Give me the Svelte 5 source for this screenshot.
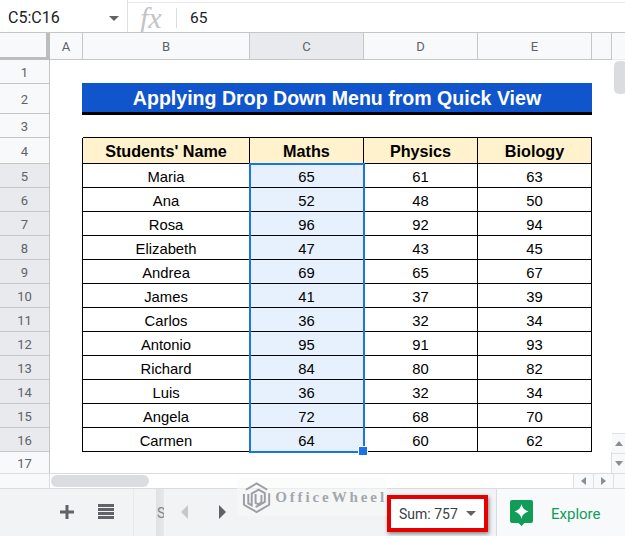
<script>
  const students = [
    ['Maria', 65, 61, 63], ['Ana', 52, 48, 50], ['Rosa', 96, 92, 94], ['Elizabeth', 47, 43, 45],
    ['Andrea', 69, 65, 67], ['James', 41, 37, 39], ['Carlos', 36, 32, 34], ['Antonio', 95, 91, 93],
    ['Richard', 84, 80, 82], ['Luis', 36, 32, 34], ['Angela', 72, 68, 70], ['Carmen', 64, 60, 62]
  ];
  const columns = ['A', 'B', 'C', 'D', 'E'];
</script>

<div class="app">
  <div class="formula">
    <div class="namebox">
      <span class="name">C5:C16</span>
      <span class="tri namebox-tri"></span>
    </div>
    <div class="fx-area">
      <span class="fx">fx</span>
      <span class="fx-sep"></span>
      <span class="value">65</span>
    </div>
  </div>

  <div class="grid">
    <div class="corner"></div>
    {#each columns as col}
      <div class="colhead" class:active={col === 'C'}>{col}</div>
    {/each}
    <div class="colhead"></div>
    <div class="scrollhead"></div>

    <div class="vscroll">
      <div class="vthumb"></div>
      <div class="vspace"></div>
      <div class="vbtn"><span class="arrow up"></span></div>
      <div class="vbtn"><span class="arrow down"></span></div>
    </div>

    <div class="rowhead">1</div><div class="cell"></div><div class="cell"></div><div class="cell"></div><div class="cell"></div><div class="cell"></div><div class="cell"></div>

    <div class="rowhead">2</div><div class="cell"></div>
    <div class="title">Applying Drop Down Menu from Quick View</div>
    <div class="cell"></div>

    <div class="rowhead">3</div><div class="cell"></div><div class="cell under"></div><div class="cell under"></div><div class="cell under"></div><div class="cell under"></div><div class="cell"></div>

    <div class="rowhead">4</div><div class="cell edge"></div>
    <div class="cell th">Students' Name</div>
    <div class="cell th">Maths</div>
    <div class="cell th">Physics</div>
    <div class="cell th">Biology</div>
    <div class="cell"></div>

    {#each students as s, i}
      <div class="rowhead active">{i + 5}</div>
      <div class="cell edge"></div>
      <div class="cell td">{s[0]}</div>
      <div class="cell td picked">{s[1]}</div>
      <div class="cell td">{s[2]}</div>
      <div class="cell td">{s[3]}</div>
      <div class="cell"></div>
    {/each}

    <div class="rowhead last">17</div>

    <div class="selection"><span class="handle"></span></div>
  </div>

  <div class="hbar">
    <div class="hbar-left"></div>
    <div class="hbar-track"><div class="hthumb"></div></div>
    <div class="hbtn"><span class="arrow left"></span></div>
    <div class="hbtn"><span class="arrow right"></span></div>
    <div class="hbar-end"></div>
  </div>

  <div class="footer">
    <div class="tools">
      <svg class="plus" width="14" height="14" viewBox="0 0 14 14"><path d="M5.500 0h3v5.500H14v3H8.500V14h-3V8.500H0v-3h5.500z" fill="#5f6368"/></svg>
      <svg class="menu" width="16" height="15" viewBox="0 0 16 15"><path d="M0 0h16v3H0zM0 4h16v3H0zM0 8h16v3H0zM0 12h16v3H0z" fill="#5f6368"/></svg>
    </div>
    <div class="clip"><span>S</span></div>
    <div class="nav">
      <span class="arrow big-left"></span>
      <span class="arrow big-right"></span>
    </div>
    <div class="sum">
      <span>Sum: 757</span>
      <span class="tri sum-tri"></span>
    </div>
    <div class="explore">
      <svg width="23" height="26" viewBox="0 0 23 26">
        <path d="M2 0h19a2 2 0 0 1 2 2v19a2 2 0 0 1-2 2h-6.500l-3 3-3-3H2a2 2 0 0 1-2-2V2a2 2 0 0 1 2-2z" fill="#0f9d58"/>
        <path d="M11.500 4c.8 4 2.800 6 7 7.500-4.200 1.500-6.200 3.500-7 7.500-.8-4-2.800-6-7-7.500 4.200-1.500 6.200-3.500 7-7.500z" fill="#fff"/>
      </svg>
      <span class="explore-label">Explore</span>
    </div>
  </div>

  <div class="watermark">
    <svg width="30" height="33" viewBox="0 0 30 33" fill="none" stroke="#9a9ea5" stroke-width="2">
      <path d="M4 8.500 15 2l11 6.500M28 12v12l-13 7.500L2 24V13"/>
      <path d="M6.500 13v9.500l3.500 2V12.500L17 8.500l6.500 3.500v9l-8.500 5-1-.5"/>
      <path d="M14 13v9l3 1.500 3-2V14"/>
    </svg>
    <span>OfficeWheel</span>
  </div>
</div>

<style>
  :global(body) { margin: 0; background: #fff; }

  .app {
    position: relative;
    width: 625px;
    height: 536px;
    overflow: hidden;
    display: flex;
    flex-direction: column;
    font-family: Roboto, "Liberation Sans", sans-serif;
    color: #000;
    background: #fff;
  }

  .formula {
    height: 32px;
    display: flex;
    border-bottom: 1px solid #c4c7c5;
    flex: none;
  }
  .namebox {
    width: 128px;
    display: flex;
    align-items: center;
    border-right: 1px solid #e0e0e0;
    padding: 2px 0 0 8px;
    box-sizing: border-box;
    font-size: 16px;
    color: #202124;
  }
  .name { flex: 1; }
  .tri { width: 0; height: 0; display: block; border-left: 5px solid transparent; border-right: 5px solid transparent; border-top: 5px solid #5f6368; }
  .namebox-tri { margin-right: 8px; margin-top: 2px; }
  .fx-area {
    flex: 1;
    display: flex;
    align-items: center;
    margin-top: 2px;
    border-top: 1px solid #e8eaed;
  }
  .fx {
    margin-left: 12px;
    width: 36px;
    font: italic 30px "Liberation Serif", serif;
    color: #c2c4c6;
    line-height: 26px;
  }
  .fx-sep { width: 1px; height: 20px; background: #dadce0; }
  .value { margin-left: 13px; font-size: 15.500px; color: #202124; }

  .grid {
    height: 440px;
    flex: none;
    display: grid;
    position: relative;
    overflow: hidden;
    grid-template-columns: 50px 33px 167px 114px 114px 114px 20px 13px;
    grid-template-rows: 27px 24px 30px 24px 26px repeat(12, 24px) 21px;
  }
  .corner {
    background: #f8f9fa;
    border-right: 4px solid #bdbdbd;
    border-bottom: 3px solid #bdbdbd;
    box-sizing: border-box;
  }
  .colhead {
    background: #f8f9fa;
    border-right: 1px solid #c4c7c5;
    border-bottom: 1px solid #c4c7c5;
    color: #5f6368;
    font-size: 13px;
    display: flex;
    align-items: center;
    justify-content: center;
    box-sizing: border-box;
  }
  .colhead.active { background: #e8eaed; }
  .scrollhead { background: #f8f9fa; border-bottom: 1px solid #e8eaed; }
  .rowhead {
    background: #f8f9fa;
    border-right: 1px solid #c4c7c5;
    border-bottom: 1px solid #c4c7c5;
    color: #5f6368;
    font-size: 13px;
    display: flex;
    align-items: center;
    justify-content: center;
    box-sizing: border-box;
    padding-top: 1px;
  }
  .rowhead.active { background: #e8eaed; }
  .rowhead.last { border-bottom: 0; }

  .vscroll {
    grid-column: 8;
    grid-row: 2 / -1;
    border-left: 1px solid #dadce0;
    margin-left: -1px;
    display: flex;
    flex-direction: column;
  }
  .vthumb { margin: 1px 0 0 2px; height: 33px; background: #dadce0; border-radius: 5px; width: 13px; }
  .vspace { flex: 1; border-bottom: 1px solid #e0e0e0; }
  .vbtn { height: 19px; display: flex; align-items: center; justify-content: center; border-bottom: 1px solid #e0e0e0; background: #f8f9fa; flex: none; }
  .vbtn:last-child { border-bottom: 0; }

  .arrow { width: 0; height: 0; display: block; }
  .arrow.up { border-left: 4px solid transparent; border-right: 4px solid transparent; border-bottom: 5px solid #8a8d91; }
  .arrow.down { border-left: 4px solid transparent; border-right: 4px solid transparent; border-top: 5px solid #8a8d91; }
  .arrow.left { border-top: 4px solid transparent; border-bottom: 4px solid transparent; border-right: 5px solid #8a8d91; }
  .arrow.right { border-top: 4px solid transparent; border-bottom: 4px solid transparent; border-left: 5px solid #8a8d91; }

  .cell { box-sizing: border-box; background: #fff; }
  .cell.edge { border-right: 1px solid #000; }
  .cell.under { border-bottom: 1px solid #000; }
  .title {
    grid-column: span 4;
    position: relative;
    z-index: 1;
    margin: -1px 0 -1px -1px;
    padding-top: 2px;
    box-sizing: border-box;
    background: #1155cc;
    border-bottom: 3px solid #000;
    color: #fff;
    font: bold 19.570px "Liberation Sans", Arial, sans-serif;
    display: flex;
    align-items: center;
    justify-content: center;
  }
  .th, .td {
    border-right: 1px solid #000;
    border-bottom: 1px solid #000;
    font-family: "Liberation Sans", Arial, sans-serif;
    display: flex;
    align-items: center;
    justify-content: center;
  }
  .th { background: #fff2cc; font-size: 16.200px; font-weight: bold; padding-top: 2px; }
  .td { font-size: 14.800px; padding-top: 3px; }
  .td.picked { background: #e7f0fd; }

  .selection {
    position: absolute;
    grid-column: 4 / 5;
    grid-row: 6 / 18;
    top: -1px;
    left: -1px;
    right: -1px;
    bottom: -1px;
    border: 2px solid #1a73e8;
    box-sizing: border-box;
    z-index: 2;
  }
  .handle {
    position: absolute;
    right: -5px;
    bottom: -5px;
    width: 8px;
    height: 8px;
    background: #1a73e8;
    border: 1px solid #fff;
  }

  .hbar {
    flex: none;
    display: flex;
    border-top: 1px solid #dadce0;
    border-bottom: 1px solid #dadce0;
    height: 14px;
  }
  .hbar-left { width: 49px; background: #f8f9fa; border-right: 1px solid #dadce0; }
  .hbar-track { width: 523px; padding: 1px 0 0 1px; box-sizing: border-box; }
  .hthumb { width: 98px; height: 12px; border-radius: 6px; background: #dadce0; }
  .hbtn { width: 19px; border-left: 1px solid #e0e0e0; display: flex; align-items: center; justify-content: center; background: #f8f9fa; }
  .hbar-end { flex: 1; border-left: 1px solid #e0e0e0; background: #f8f9fa; }

  .footer {
    flex: 1;
    display: flex;
    align-items: stretch;
    background: #f1f3f4;
  }
  .tools {
    width: 134px;
    box-sizing: border-box;
    border-right: 1px solid #e8eaed;
    display: flex;
    align-items: center;
    padding: 0 0 2px 60px;
    gap: 24px;
  }
  .clip {
    width: 30px;
    overflow: hidden;
    padding-left: 23px;
    box-sizing: border-box;
    display: flex;
    align-items: center;
    background: linear-gradient(90deg, #f1f3f4 73%, #dfe1e3 75%, #e6e8e9 100%);
    color: #80868b;
    font-size: 14px;
  }
  .nav {
    width: 223px;
    display: flex;
    align-items: center;
    padding: 0 0 2px 17px;
    gap: 31px;
    box-sizing: border-box;
  }
  .arrow.big-left { border-top: 7px solid transparent; border-bottom: 7px solid transparent; border-right: 7px solid #c6c9cc; }
  .arrow.big-right { border-top: 7px solid transparent; border-bottom: 7px solid transparent; border-left: 7px solid #5f6368; }
  .sum {
    width: 101px;
    height: 37px;
    margin: 6px 8px 0 0;
    box-sizing: border-box;
    border: 4px solid #e60000;
    background: #fff;
    box-shadow: 1px 2px 4px rgba(0, 0, 0, 0.45);
    display: flex;
    align-items: center;
    padding-left: 8px;
    font-size: 14px;
    color: #3c4043;
  }
  .sum-tri { margin-left: 8px; }
  .explore {
    flex: 1;
    border-left: 1px solid #dadce0;
    background: #f8f9fa;
    display: flex;
    align-items: center;
    padding-left: 13px;
    gap: 18px;
    color: #0f9d58;
    font-size: 15px;
  }
  .explore-label { padding-top: 2px; }

  .watermark {
    position: absolute;
    left: 237px;
    top: 478px;
    width: 150px;
    height: 38px;
    display: flex;
    align-items: center;
    gap: 4px;
    padding-left: 5px;
    box-sizing: border-box;
    background: rgba(248, 249, 250, 0.55);
    color: #a3a7ad;
    font: bold 15px "Liberation Serif", serif;
    letter-spacing: 2.900px;
    white-space: nowrap;
  }
</style>
